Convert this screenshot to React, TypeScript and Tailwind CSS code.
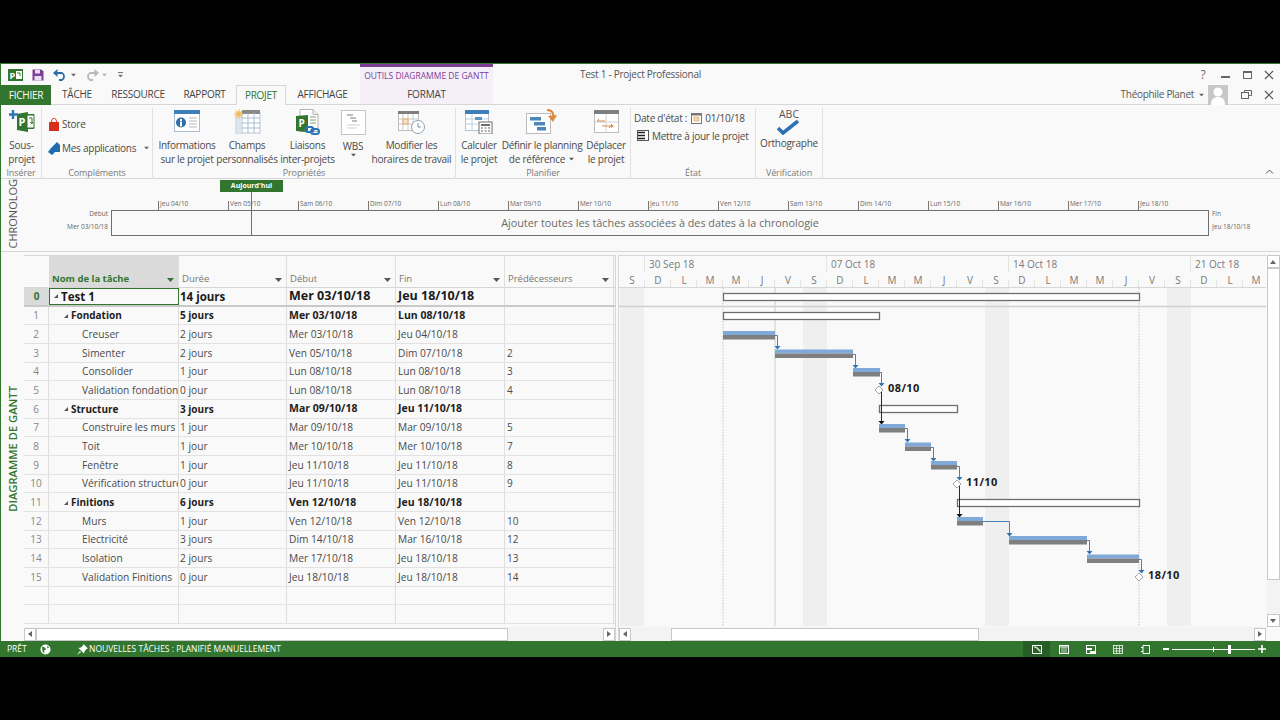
import React from "react";

const font = "font-['Open_Sans','Noto_Sans',sans-serif]";

type Task = { id: number; name: string; dur: string; start: string; end: string; pred: string; level: 0 | 1 | 2 };

const tasks: Task[] = [
  { id: 0, name: "Test 1", dur: "14 jours", start: "Mer 03/10/18", end: "Jeu 18/10/18", pred: "", level: 0 },
  { id: 1, name: "Fondation", dur: "5 jours", start: "Mer 03/10/18", end: "Lun 08/10/18", pred: "", level: 1 },
  { id: 2, name: "Creuser", dur: "2 jours", start: "Mer 03/10/18", end: "Jeu 04/10/18", pred: "", level: 2 },
  { id: 3, name: "Simenter", dur: "2 jours", start: "Ven 05/10/18", end: "Dim 07/10/18", pred: "2", level: 2 },
  { id: 4, name: "Consolider", dur: "1 jour", start: "Lun 08/10/18", end: "Lun 08/10/18", pred: "3", level: 2 },
  { id: 5, name: "Validation fondation", dur: "0 jour", start: "Lun 08/10/18", end: "Lun 08/10/18", pred: "4", level: 2 },
  { id: 6, name: "Structure", dur: "3 jours", start: "Mar 09/10/18", end: "Jeu 11/10/18", pred: "", level: 1 },
  { id: 7, name: "Construire les murs", dur: "1 jour", start: "Mar 09/10/18", end: "Mar 09/10/18", pred: "5", level: 2 },
  { id: 8, name: "Toit", dur: "1 jour", start: "Mer 10/10/18", end: "Mer 10/10/18", pred: "7", level: 2 },
  { id: 9, name: "Fenêtre", dur: "1 jour", start: "Jeu 11/10/18", end: "Jeu 11/10/18", pred: "8", level: 2 },
  { id: 10, name: "Vérification structure", dur: "0 jour", start: "Jeu 11/10/18", end: "Jeu 11/10/18", pred: "9", level: 2 },
  { id: 11, name: "Finitions", dur: "6 jours", start: "Ven 12/10/18", end: "Jeu 18/10/18", pred: "", level: 1 },
  { id: 12, name: "Murs", dur: "1 jour", start: "Ven 12/10/18", end: "Ven 12/10/18", pred: "10", level: 2 },
  { id: 13, name: "Electricité", dur: "3 jours", start: "Dim 14/10/18", end: "Mar 16/10/18", pred: "12", level: 2 },
  { id: 14, name: "Isolation", dur: "2 jours", start: "Mer 17/10/18", end: "Jeu 18/10/18", pred: "13", level: 2 },
  { id: 15, name: "Validation Finitions", dur: "0 jour", start: "Jeu 18/10/18", end: "Jeu 18/10/18", pred: "14", level: 2 },
];

const ticks = ["Jeu 04/10", "Ven 05/10", "Sam 06/10", "Dim 07/10", "Lun 08/10", "Mar 09/10", "Mer 10/10", "Jeu 11/10", "Ven 12/10", "Sam 13/10", "Dim 14/10", "Lun 15/10", "Mar 16/10", "Mer 17/10", "Jeu 18/10"];
const days = "S D L M M J V S D L M M J V S D L M M J V S D L M".split(" ");

function Caret({ className = "" }: { className?: string }) {
  return (
    <svg width="7" height="4" viewBox="0 0 7 4" className={className}>
      <path d="M0 0h7L3.5 4z" fill="currentColor" />
    </svg>
  );
}

function RibbonBtn({ w, icon, l1, l2, caret }: { w: string; icon: React.ReactNode; l1: string; l2?: string; caret?: boolean }) {
  return (
    <div className={`${w} flex flex-col items-center shrink-0`}>
      <div className="h-[28px] flex items-center justify-center">{icon}</div>
      <div className="h-[3px]" />
      <div className="text-[10px] tracking-[-0.25px] leading-[14px] whitespace-nowrap">{l1}</div>
      <div className="text-[10px] tracking-[-0.25px] leading-[14px] whitespace-nowrap flex items-center gap-[3px]">
        {l2}
        {caret && <Caret className="text-[#555] scale-75" />}
      </div>
    </div>
  );
}

function Group({ w, label, children }: { w: string; label: string; children: React.ReactNode }) {
  return (
    <div className={`${w} shrink-0 flex flex-col h-[71px] border-r border-[#e2e2e2]`}>
      <div className="flex-1 flex min-h-0">{children}</div>
      <div className="h-[13px] text-[9px] tracking-[-0.1px] leading-[13px] text-center text-[#7a7a7a]">{label}</div>
    </div>
  );
}

function SubProjectIcon() {
  return (
    <svg width="26" height="26" viewBox="0 0 26 26">
      <path d="M8 5l11-2v2h6v15h-6v3L8 21z" fill="#31752f" />
      <rect x="18" y="6" width="7" height="13" fill="#fff" stroke="#31752f" />
      <path d="M20 9h3v5M21 13l2 2 1-2" fill="none" stroke="#31752f" />
      <text x="9.5" y="17" fontSize="11" fontWeight="700" fill="#fff" fontFamily="Open Sans">P</text>
      <path d="M4 1v9M0 5.500h9" stroke="#2e75b6" strokeWidth="2.4" />
    </svg>
  );
}

function InfoIcon() {
  return (
    <svg width="26" height="24" viewBox="0 0 26 24">
      <rect x=".5" y=".5" width="25" height="21" fill="#fff" stroke="#a9bcd2" />
      <rect x="0" y="0" width="26" height="4" fill="#3e7fba" />
      <circle cx="7" cy="12.500" r="5" fill="#2e6da8" />
      <rect x="6" y="9" width="2" height="2" fill="#fff" />
      <rect x="6" y="11.500" width="2" height="5" fill="#fff" />
      <path d="M15 8h8M15 11h8M15 14h8M15 17h8" stroke="#b7b7b7" />
    </svg>
  );
}

function FieldsIcon() {
  return (
    <svg width="28" height="26" viewBox="0 0 28 26">
      <rect x="3" y="4" width="24" height="20" fill="#fff" stroke="#b7c4d3" />
      <rect x="9" y="1" width="18" height="4" fill="#8a8a8a" />
      <path d="M9 4v20M15 4v20M21 4v20M3 9h24M3 14h24M3 19h24" stroke="#a8bdd0" />
      <rect x="3.500" y="9" width="5" height="15" fill="#dbe5f0" />
      <circle cx="6" cy="5" r="3" fill="#f5c87d" />
      <path d="M6 0v10M1 5h10M2.500 1.500l7 7M9.500 1.500l-7 7" stroke="#f0b755" strokeWidth=".8" />
    </svg>
  );
}

function LinksIcon() {
  return (
    <svg width="26" height="26" viewBox="0 0 26 26">
      <path d="M5 .5h13l5 5v17H5z" fill="#fff" stroke="#b5b5b5" />
      <path d="M18 .5v5h5" fill="#eee" stroke="#b5b5b5" />
      <path d="M1 7l12-1v17l-12-1z" fill="#31752f" />
      <text x="3.500" y="18" fontSize="10" fontWeight="700" fill="#fff" fontFamily="Open Sans">P</text>
      <path d="M15 8h6M15 11h6M15 14h6" stroke="#7aa56f" />
      <rect x="10.500" y="18" width="8" height="5" rx="2.500" fill="none" stroke="#2e75b6" strokeWidth="2" />
      <rect x="16" y="20" width="8" height="5" rx="2.500" fill="none" stroke="#2e75b6" strokeWidth="2" />
    </svg>
  );
}

function WbsIcon() {
  return (
    <svg width="25" height="25" viewBox="0 0 25 25">
      <rect x=".5" y=".5" width="24" height="24" fill="#fff" stroke="#c4c4c4" />
      <path d="M6 5h6M9 8h6M11 11h5" stroke="#a8a8a8" strokeWidth="1.500" />
      <path d="M6 15h13M6 18h10" stroke="#d0d0d0" />
    </svg>
  );
}

function ScheduleIcon() {
  return (
    <svg width="28" height="26" viewBox="0 0 28 26">
      <rect x=".5" y="2.500" width="20" height="19" fill="#fff" stroke="#bcbcbc" />
      <rect x="0" y="2" width="21" height="3" fill="#7f7f7f" />
      <path d="M5 5v17M10 5v17M15 5v17M1 10h20M1 15h20" stroke="#c9c9c9" />
      <rect x="5" y="10" width="5" height="5" fill="#f7e3c8" stroke="#e0a96a" />
      <circle cx="20" cy="18" r="6.500" fill="#fff" stroke="#8d9fb3" />
      <path d="M20 14v4h3" fill="none" stroke="#7d8fa3" />
    </svg>
  );
}

function CalcIcon() {
  return (
    <svg width="28" height="24" viewBox="0 0 28 24">
      <rect x=".5" y=".5" width="23" height="20" fill="#fff" stroke="#b7c4d3" />
      <rect x="0" y="0" width="24" height="4" fill="#3e7fba" />
      <path d="M7 4v17M1 9h22M1 14h22" stroke="#bcd0e2" />
      <rect x="10" y="7" width="7" height="3" fill="#5d94c6" />
      <rect x="14" y="12" width="13" height="12" fill="#fff" stroke="#6e6e6e" />
      <rect x="16" y="14" width="9" height="2" fill="#6e6e6e" />
      <path d="M16 18h2M19.500 18h2M23 18h2M16 21h2M19.500 21h2M23 21h2" stroke="#5f5f5f" />
    </svg>
  );
}

function BaselineIcon() {
  return (
    <svg width="32" height="26" viewBox="0 0 32 26">
      <rect x=".5" y="4.500" width="24" height="20" fill="#fff" stroke="#bcbcbc" />
      <rect x="4" y="8" width="11" height="3.500" fill="#4d86bb" />
      <rect x="8" y="13" width="11" height="3.500" fill="#4d86bb" />
      <rect x="11" y="18" width="9" height="3.500" fill="#4d86bb" />
      <path d="M21 1c5 0 7 3 6 8" fill="none" stroke="#e08a3c" strokeWidth="2.200" />
      <path d="M22 7l5 6 4-7z" fill="#e08a3c" />
    </svg>
  );
}

function MoveIcon() {
  return (
    <svg width="25" height="24" viewBox="0 0 25 24">
      <rect x=".5" y=".5" width="24" height="22" fill="#fff" stroke="#bcbcbc" />
      <rect x="0" y="0" width="25" height="4" fill="#7f7f7f" />
      <path d="M1 12h23M12 4v19" stroke="#d0d0d0" />
      <path d="M5 9l-2 2h8M8 16h9l-2 2" fill="none" stroke="#d98a4a" />
      <path d="M17 14l3 2-3 2z" fill="#d98a4a" />
    </svg>
  );
}

function SpellIcon() {
  return (
    <svg width="24" height="15" viewBox="0 0 24 15">
      <path d="M1 8l5 5L21 1" fill="none" stroke="#2e72b2" strokeWidth="3.600" />
    </svg>
  );
}

function TitleBar() {
  return (
    <div className="h-[41px] flex shrink-0">
      <div className="w-[359px] shrink-0 flex flex-col">
        <div className="h-[21px] flex items-center">
          <svg width="15" height="14" viewBox="0 0 15 14" className="ml-[7px]">
            <rect x="0" y="1" width="15" height="12" fill="#31752f" />
            <rect x="8" y="3" width="6" height="8" fill="#fff" />
            <path d="M9 5h3v3" stroke="#31752f" fill="none" />
            <text x="1.500" y="10.500" fontSize="9" fontWeight="700" fill="#fff" fontFamily="Open Sans">P</text>
          </svg>
          <svg width="12" height="12" viewBox="0 0 12 12" className="ml-[9px]">
            <path d="M.5.500h9l2 2v9H.5z" fill="#7d3f98" />
            <rect x="3" y="1" width="5" height="3.500" fill="#e9dff0" />
            <rect x="2.500" y="7" width="7" height="4.500" fill="#e9dff0" />
          </svg>
          <svg width="14" height="12" viewBox="0 0 14 12" className="ml-[9px]">
            <path d="M3 4h6a4 4 0 0 1 0 7H6" fill="none" stroke="#2c6ca8" strokeWidth="1.800" />
            <path d="M4.500 0v8L0 4z" fill="#2c6ca8" />
          </svg>
          <Caret className="ml-[3px] text-[#666] scale-75" />
          <svg width="14" height="12" viewBox="0 0 14 12" className="ml-[8px]">
            <path d="M11 4H5a4 4 0 0 0 0 7h3" fill="none" stroke="#b9b9b9" strokeWidth="1.800" />
            <path d="M9.500 0v8L14 4z" fill="#b9b9b9" />
          </svg>
          <Caret className="ml-[2px] text-[#b5b5b5] scale-75" />
          <div className="ml-[9px] flex flex-col items-center gap-px text-[#777]">
            <div className="w-[5px] h-px bg-[#777]" />
            <Caret className="scale-75" />
          </div>
        </div>
        <div className="h-[20px] flex text-[10px] tracking-[-0.25px] text-[#444] border-b border-[#d6d6d6]">
          <div className="ml-0 w-[50px] h-[20px] bg-[#31752f] text-white flex items-center justify-center">FICHIER</div>
          <div className="w-[52px] flex items-center justify-center">TÂCHE</div>
          <div className="w-[70px] flex items-center justify-center">RESSOURCE</div>
          <div className="w-[63px] flex items-center justify-center">RAPPORT</div>
          <div className="w-[50px] h-[20px] border border-b-0 border-[#d6d6d6] bg-[#f9f9f9] text-[#31752f] flex items-center justify-center">PROJET</div>
          <div className="w-[73px] flex items-center justify-center">AFFICHAGE</div>
        </div>
      </div>
      <div className="w-[133px] shrink-0 bg-[#f4eff8] border-t-[3px] border-[#7d3f98] border-b border-b-[#d6d6d6] flex flex-col items-center">
        <div className="h-[18px] flex items-center text-[8.5px] text-[#7d3f98] whitespace-nowrap">OUTILS DIAGRAMME DE GANTT</div>
        <div className="h-[19px] flex items-center text-[10px] tracking-[-0.2px] text-[#444]">FORMAT</div>
      </div>
      <div className="flex-1 flex flex-col min-w-0">
        <div className="h-[21px] flex items-center text-[10px] tracking-[-0.27px] text-[#555]">
          <div className="ml-[87px] whitespace-nowrap">Test 1 - Project Professional</div>
          <div className="ml-auto flex items-center text-[#666]">
            <div className="w-[22px] text-center text-[12px]">?</div>
            <div className="w-[22px] flex justify-center">
              <div className="w-[9px] h-[2px] bg-[#666] mt-[5px]" />
            </div>
            <div className="w-[22px] flex justify-center">
              <div className="w-[9px] h-[8px] border border-[#666] border-t-2" />
            </div>
            <svg width="22" height="10" viewBox="0 0 22 10" className="mr-0">
              <path d="M7 1l8 8M15 1l-8 8" stroke="#555" strokeWidth="1.200" />
            </svg>
          </div>
        </div>
        <div className="h-[20px] flex items-center border-b border-[#d6d6d6] text-[10px] tracking-[-0.3px] text-[#555]">
          <div className="ml-auto flex items-center">
            <span className="whitespace-nowrap">Théophile Planet</span>
            <Caret className="ml-[4px] text-[#666] scale-75" />
            <svg width="20" height="20" viewBox="0 0 20 20" className="ml-[3px]">
              <rect width="20" height="20" fill="#c8c8c8" />
              <circle cx="10" cy="7" r="4.500" fill="#fff" />
              <path d="M3 20c0-6 3-8 7-8s7 2 7 8z" fill="#fff" />
            </svg>
            <svg width="11" height="9" viewBox="0 0 11 9" className="ml-[13px]">
              <path d="M3.500 2V.5h7v5H8" fill="none" stroke="#666" />
              <rect x=".5" y="2.500" width="7" height="6" fill="none" stroke="#666" />
            </svg>
            <svg width="22" height="10" viewBox="0 0 22 10" className="ml-[6px]">
              <path d="M7 1l8 8M15 1l-8 8" stroke="#555" strokeWidth="1.200" />
            </svg>
          </div>
        </div>
      </div>
    </div>
  );
}

function Ribbon() {
  return (
    <div className="h-[74px] shrink-0 flex pt-[3px] border-b border-[#d6d6d6] text-[#4a4a4a] relative">
      <Group w="w-[41px]" label="Insérer">
        <RibbonBtn w="w-[41px]" icon={<SubProjectIcon />} l1="Sous-" l2="projet" />
      </Group>
      <Group w="w-[111px]" label="Compléments">
        <div className="flex flex-col pl-[6px] text-[10px] tracking-[-0.25px]">
          <div className="h-[24px] mt-[4px] flex items-center gap-[2px]">
            <svg width="12" height="13" viewBox="0 0 12 13">
              <path d="M1 4h10v9H1z" fill="#d8301c" />
              <path d="M3.500 4c0-5 5-5 5 0" fill="none" stroke="#d8301c" />
            </svg>
            Store
          </div>
          <div className="h-[24px] flex items-center gap-[2px] whitespace-nowrap">
            <svg width="12" height="13" viewBox="0 0 12 13">
              <path d="M3 6l6-6 3 3v7H7L4 13 0 10z" fill="#1f6cb0" />
            </svg>
            Mes applications
            <Caret className="ml-[5px] text-[#666] scale-75" />
          </div>
        </div>
      </Group>
      <Group w="w-[303px]" label="Propriétés">
        <div className="w-[4px] shrink-0" />
        <RibbonBtn w="w-[60px]" icon={<InfoIcon />} l1="Informations" l2="sur le projet" />
        <RibbonBtn w="w-[60px]" icon={<FieldsIcon />} l1="Champs" l2="personnalisés" />
        <RibbonBtn w="w-[61px]" icon={<LinksIcon />} l1="Liaisons" l2="inter-projets" />
        <RibbonBtn w="w-[30px]" icon={<WbsIcon />} l1="WBS" caret />
        <RibbonBtn w="w-[87px]" icon={<ScheduleIcon />} l1="Modifier les" l2="horaires de travail" />
      </Group>
      <Group w="w-[175px]" label="Planifier">
        <RibbonBtn w="w-[46px]" icon={<CalcIcon />} l1="Calculer" l2="le projet" />
        <RibbonBtn w="w-[80px]" icon={<BaselineIcon />} l1="Définir le planning" l2="de référence" caret />
        <RibbonBtn w="w-[48px]" icon={<MoveIcon />} l1="Déplacer" l2="le projet" />
      </Group>
      <Group w="w-[125px]" label="État">
        <div className="flex flex-col pl-[3px] text-[10px] tracking-[-0.25px]">
          <div className="h-[18px] mt-[1px] flex items-center whitespace-nowrap">
            Date d'état :
            <svg width="11" height="11" viewBox="0 0 11 11" className="ml-[4px] mr-[3px]">
              <rect x=".5" y=".5" width="10" height="10" fill="#fff" stroke="#777" />
              <rect width="11" height="2.500" fill="#777" />
              <rect x="3" y="4" width="5" height="4" fill="#f3d9b8" stroke="#d99b55" strokeWidth=".6" />
            </svg>
            01/10/18
          </div>
          <div className="h-[18px] flex items-center whitespace-nowrap pl-[3px] gap-[3px]">
            <svg width="12" height="12" viewBox="0 0 12 12">
              <rect x=".5" y=".5" width="11" height="10" fill="#fff" stroke="#555" />
              <path d="M1 2.500h7M1 5.500h7M1 8.500h7" stroke="#222" strokeWidth="1.500" />
            </svg>
            Mettre à jour le projet
          </div>
        </div>
      </Group>
      <Group w="w-[67px]" label="Vérification">
        <div className="w-full flex flex-col items-center">
          <div className="text-[10.5px] leading-[11px] text-[#555] mt-px">ABC</div>
          <SpellIcon />
          <div className="h-[1px]" />
          <div className="text-[10px] tracking-[-0.25px] leading-[14px]">Orthographe</div>
        </div>
      </Group>
      <svg width="9" height="5" viewBox="0 0 9 5" className="absolute right-[6px] bottom-[4px]">
        <path d="M1 4.500l3.500-3.500 3.500 3.500" fill="none" stroke="#555" />
      </svg>
    </div>
  );
}

function Timeline() {
  return (
    <div className="h-[73px] shrink-0 flex border-b border-[#d6d6d6] relative">
      <div className="w-[23px] shrink-0 flex justify-center items-end pb-[2px]">
        <div className="[writing-mode:vertical-rl] rotate-180 text-[11px] leading-[14px] text-[#555] whitespace-nowrap">CHRONOLOG</div>
      </div>
      <div className="w-[87px] shrink-0 pt-[28px] pr-[3px] text-right text-[6.5px] leading-[13px] text-[#666]">
        <div>Début</div>
        <div className="whitespace-nowrap">Mer 03/10/18</div>
      </div>
      <div className="w-[1098px] shrink-0 flex flex-col">
        <div className="h-[31px] flex pl-[47px] items-end">
          {ticks.map((t) => (
            <div key={t} className="w-[70px] shrink-0 h-[9px] border-l border-[#777] pl-px text-[6.5px] leading-[6px] text-[#666] whitespace-nowrap">
              {t}
            </div>
          ))}
        </div>
        <div className="h-[26px] border border-[#6f6f6f] flex items-center justify-center text-[10.8px] text-[#6b6b6b] whitespace-nowrap">
          Ajouter toutes les tâches associées à des dates à la chronologie
        </div>
      </div>
      <div className="pt-[28px] pl-[3px] text-[6.5px] leading-[13px] text-[#666] whitespace-nowrap">
        <div>Fin</div>
        <div>Jeu 18/10/18</div>
      </div>
      <div className="absolute left-[219px] top-[1px] w-[63px] h-[12px] bg-[#31752f] text-white text-[7px] font-bold leading-[12px] text-center">Aujourd'hui</div>
      <div className="absolute left-[250px] top-[13px] w-px h-[43px] bg-[#4d8a4a]" />
    </div>
  );
}

function ScrollH({ left, thumb, after }: { left?: string; thumb: string; after: string }) {
  return (
    <div className="h-[14px] shrink-0 flex items-center bg-[#f3f3f3]">
      <div className="w-[12px] h-[13px] shrink-0 bg-white border border-[#c8c8c8] flex items-center justify-center">
        <div className="w-0 h-0 border-y-[3px] border-y-transparent border-r-[4px] border-r-[#666]" />
      </div>
      {left && <div className={`${left} shrink-0`} />}
      <div className={`${thumb} h-[13px] shrink-0 bg-white border border-[#c8c8c8]`} />
      <div className={`${after} shrink-0`} />
      <div className="w-[12px] h-[13px] shrink-0 bg-white border border-[#c8c8c8] flex items-center justify-center">
        <div className="w-0 h-0 border-y-[3px] border-y-transparent border-l-[4px] border-l-[#666]" />
      </div>
    </div>
  );
}

function HeaderCell({ w, label, active }: { w: string; label: string; active?: boolean }) {
  return (
    <div
      className={`${w} shrink-0 h-full flex items-end justify-between pl-[3px] pr-[4px] pb-[2px] border-r border-[#dedede] text-[9.5px] leading-[13px] ${
        active ? "bg-[#dadada] text-[#31752f] font-bold" : "text-[#777]"
      }`}
    >
      <span className="whitespace-nowrap">{label}</span>
      <Caret className={`mb-[3px] ${active ? "text-[#31752f]" : "text-[#555]"}`} />
    </div>
  );
}

function TaskRow({ task }: { task: Task }) {
  const weight = task.level === 0 ? "font-bold text-[11.5px] text-[#1a1a1a]" : task.level === 1 ? "font-bold text-[10px] text-[#222]" : "text-[10.2px] text-[#4a4a4a]";
  const dateWeight = task.level === 0 ? "font-bold text-[12.5px] text-[#1a1a1a]" : task.level === 1 ? "font-bold text-[10.5px] text-[#222]" : "text-[10.2px] text-[#4a4a4a]";
  const pad = task.level === 0 ? "pl-[4px]" : task.level === 1 ? "pl-[15px]" : "pl-[33px]";
  const selected = task.id === 0;
  return (
    <div className={`h-[18.67px] flex ${selected ? "border-b-2 border-[#c9c9c9]" : "border-b border-[#e2e2e2]"}`}>
      <div className={`w-[25px] shrink-0 pt-px flex items-center justify-center text-[10px] ${selected ? "bg-[#dadada] text-[#31752f] font-bold" : "text-[#888] border-r border-[#dedede]"}`}>
        {task.id}
      </div>
      <div className={`w-[130px] shrink-0 overflow-hidden flex items-center whitespace-nowrap relative ${pad} ${weight} ${selected ? "border border-[#31752f]" : "pt-px border-r border-[#dedede]"}`}>
        {task.level < 2 && <div className="w-0 h-0 mr-[3px] border-t-[4px] border-t-transparent border-r-[4px] border-r-[#555] shrink-0" />}
        {task.name}
      </div>
      <div className={`w-[108px] shrink-0 pl-px pt-px flex items-center border-r border-[#dedede] whitespace-nowrap ${weight}`}>{task.dur}</div>
      <div className={`w-[109px] shrink-0 pl-[2px] pt-px flex items-center border-r border-[#dedede] whitespace-nowrap ${dateWeight}`}>{task.start}</div>
      <div className={`w-[109px] shrink-0 pl-[2px] pt-px flex items-center border-r border-[#dedede] whitespace-nowrap ${dateWeight}`}>{task.end}</div>
      <div className="w-[109px] shrink-0 pl-[2px] pt-px flex items-center border-r border-[#dedede] text-[10px] text-[#4a4a4a]">{task.pred}</div>
    </div>
  );
}

function EmptyRow() {
  return (
    <div className="h-[18.67px] flex border-b border-[#e2e2e2]">
      <div className="w-[25px] shrink-0 border-r border-[#dedede]" />
      <div className="w-[130px] shrink-0 border-r border-[#dedede]" />
      <div className="w-[108px] shrink-0 border-r border-[#dedede]" />
      <div className="w-[109px] shrink-0 border-r border-[#dedede]" />
      <div className="w-[109px] shrink-0 border-r border-[#dedede]" />
      <div className="w-[109px] shrink-0 border-r border-[#dedede]" />
    </div>
  );
}

function TaskTable() {
  return (
    <div className="w-[591px] shrink-0 flex flex-col">
      <div className="flex-1 min-h-0 overflow-hidden">
        <div className="h-[33px] flex border-y border-[#d6d6d6]">
          <div className="w-[25px] shrink-0" />
          <HeaderCell w="w-[130px]" label="Nom de la tâche" active />
          <HeaderCell w="w-[108px]" label="Durée" />
          <HeaderCell w="w-[109px]" label="Début" />
          <HeaderCell w="w-[109px]" label="Fin" />
          <HeaderCell w="w-[109px]" label="Prédécesseurs" />
        </div>
        {tasks.map((t) => (
          <TaskRow key={t.id} task={t} />
        ))}
        <EmptyRow />
        <EmptyRow />
      </div>
      <ScrollH thumb="w-[472px]" after="w-[95px]" />
    </div>
  );
}

// chart origin is x=619, y=288
const X = (x: number) => x - 619;
const Y = (y: number) => y - 288;

function Bar({ x1, x2, y }: { x1: number; x2: number; y: number }) {
  return (
    <g>
      <rect x={X(x1)} y={Y(y)} width={x2 - x1} height="4" fill="#7fa9d8" />
      <rect x={X(x1)} y={Y(y) + 4} width={x2 - x1} height="4.500" fill="#7f7f7f" />
    </g>
  );
}

function Summary({ x1, x2, y }: { x1: number; x2: number; y: number }) {
  return (
    <rect x={X(x1) + 0.5} y={Y(y) + 0.5} width={x2 - x1 - 1} height="7" fill="#fff" stroke="#6e6e6e" strokeWidth="1.300" />
  );
}

function Diamond({ x, y }: { x: number; y: number }) {
  return <path d={`M${X(x)} ${Y(y) - 4}l4 4-4 4-4-4z`} fill="#fff" stroke="#9a9a9a" strokeWidth=".9" />;
}

function Link({ x1, y1, x2, y2, black }: { x1: number; y1: number; x2: number; y2: number; black?: boolean }) {
  const c = black ? "#111" : "#2f75b5";
  return (
    <g>
      <path d={`M${X(x1)} ${Y(y1) + 0.5}H${X(x2) + 0.5}V${Y(y2)}`} fill="none" stroke={c} strokeWidth=".9" />
      <path d={`M${X(x2) - 2.500} ${Y(y2) - 3}h6l-3 3.500z`} fill={c} />
    </g>
  );
}

function GanttChart() {
  return (
    <svg width="647" height="338" viewBox="0 0 647 338" className="block">
      {[620, 803, 985, 1167].map((x) => (
        <rect key={x} x={X(x)} y="0" width="24" height="338" fill="#efefef" />
      ))}
      <path d="M0 18.500H647" stroke="#cfcfcf" strokeWidth="1.500" />
      <path d={`M${X(723)} 0V338`} stroke="#c4c4c4" strokeDasharray="1.500 1.500" />
      <path d={`M${X(1139)} 0V338`} stroke="#c4c4c4" strokeDasharray="1.500 1.500" />
      <path d={`M${X(775)} 0V338`} stroke="#c8dcc6" strokeWidth="1.200" />

      <Summary x1={723} x2={1140} y={293} />
      <Summary x1={723} x2={880} y={312} />
      <Summary x1={879} x2={958} y={405} />
      <Summary x1={957} x2={1140} y={499} />

      <Link x1={775} y1={335} x2={777} y2={349} />
      <Link x1={853} y1={354} x2={855} y2={368} />
      <Link x1={879} y1={372} x2={881} y2={386} />
      <Link x1={881} y1={388} x2={881} y2={424} black />
      <Link x1={905} y1={428} x2={907} y2={442} />
      <Link x1={931} y1={447} x2={933} y2={461} />
      <Link x1={957} y1={466} x2={959} y2={480} />
      <Link x1={959} y1={482} x2={959} y2={517} black />
      <Link x1={983} y1={521} x2={1009} y2={536} />
      <Link x1={1087} y1={540} x2={1089} y2={554} />
      <Link x1={1139} y1={559} x2={1141} y2={573} />

      <Bar x1={723} x2={775} y={331} />
      <Bar x1={775} x2={853} y={349.5} />
      <Bar x1={853} x2={880} y={368} />
      <Bar x1={879} x2={905} y={424} />
      <Bar x1={905} x2={931} y={442.5} />
      <Bar x1={931} x2={957} y={461} />
      <Bar x1={957} x2={983} y={517} />
      <Bar x1={1009} x2={1087} y={536} />
      <Bar x1={1087} x2={1139} y={554.5} />

      <Diamond x={879} y={390} />
      <Diamond x={957} y={484} />
      <Diamond x={1139} y={577} />

      <g fontSize="11" fontWeight="700" fill="#1a1a1a" letterSpacing=".4">
        <text x={X(888)} y={Y(392)}>08/10</text>
        <text x={X(966)} y={Y(485.500)}>11/10</text>
        <text x={X(1148)} y={Y(579)}>18/10</text>
      </g>
    </svg>
  );
}

function Gantt() {
  return (
    <div className="w-[647px] shrink-0 flex flex-col overflow-hidden">
      <div className="h-[33px] shrink-0 border-y border-[#d6d6d6] flex flex-col text-[#7a7a7a] overflow-hidden">
        <div className="h-[16px] flex text-[10px] leading-[16px]">
          <div className="w-[26px] shrink-0 border-r border-[#e3e3e3]" />
          {["30 Sep 18", "07 Oct 18", "14 Oct 18", "21 Oct 18"].map((d) => (
            <div key={d} className="w-[182px] shrink-0 pl-[4px] border-r border-[#e3e3e3] whitespace-nowrap">
              {d}
            </div>
          ))}
        </div>
        <div className="h-[16px] flex text-[10px] leading-[16px]">
          {days.map((d, i) => (
            <div key={i} className="w-[26px] shrink-0 text-center relative">
              {d}
              <div className="absolute right-0 top-[8px] w-px h-[8px] bg-[#e3e3e3]" />
            </div>
          ))}
        </div>
      </div>
      <div className="flex-1 min-h-0 overflow-hidden">
        <GanttChart />
      </div>
      <ScrollH left="w-[40px]" thumb="w-[308px]" after="w-[275px]" />
    </div>
  );
}

function StatusBar() {
  return (
    <div className="h-[16px] shrink-0 bg-[#31752f] text-white flex items-center text-[8.5px] whitespace-nowrap">
      <span className="ml-[6px] w-[32px]">PRÊT</span>
      <svg width="11" height="11" viewBox="0 0 11 11" className="ml-px">
        <circle cx="5.500" cy="5.500" r="5" fill="#fff" />
        <path d="M2 2.500l3 1 1 2-2 1 .5 3-2-2zM7 1.500l2 2-1.500 1z" fill="#31752f" />
      </svg>
      <svg width="11" height="11" viewBox="0 0 11 11" className="ml-[26px]">
        <path d="M6.500 0L11 4.500 9.500 5 7.500 7.500 7 9.500 1.500 4 4 3.500 6 1.500zM3 7L0 11l4-3z" fill="#fff" />
      </svg>
      <span className="ml-px">NOUVELLES TÂCHES : PLANIFIÉ MANUELLEMENT</span>
      <div className="ml-auto flex items-center h-full">
        <div className="w-[27px] h-full bg-[#265e25] flex items-center justify-center">
          <svg width="10" height="9" viewBox="0 0 10 9">
            <rect x=".5" y=".5" width="9" height="8" fill="none" stroke="#fff" />
            <path d="M2 2h2v1h2v2h2v2" fill="none" stroke="#fff" />
          </svg>
        </div>
        <div className="w-[27px] flex justify-center">
          <svg width="10" height="9" viewBox="0 0 10 9">
            <rect x=".5" y=".5" width="9" height="8" fill="none" stroke="#fff" />
            <path d="M3 1v7M5 1v7M7 1v7M.5 2h9" stroke="#fff" strokeWidth=".7" />
          </svg>
        </div>
        <div className="w-[27px] flex justify-center">
          <svg width="10" height="9" viewBox="0 0 10 9">
            <rect x=".5" y=".5" width="9" height="8" fill="none" stroke="#fff" />
            <rect x="1" y="3" width="5" height="2" fill="#fff" />
            <rect x="4" y="6" width="5" height="2" fill="#fff" />
          </svg>
        </div>
        <div className="w-[27px] flex justify-center">
          <svg width="10" height="9" viewBox="0 0 10 9">
            <rect x=".5" y=".5" width="9" height="8" fill="none" stroke="#fff" strokeWidth=".8" />
            <path d="M3.500 1v7M6.500 1v7M1 3.500h8M1 6h8" stroke="#fff" strokeWidth=".7" />
          </svg>
        </div>
        <div className="w-[27px] flex justify-center">
          <svg width="10" height="9" viewBox="0 0 10 9">
            <path d="M3 .5h6.500v8H3zM3 2.500H1M3 6.500H1" fill="none" stroke="#fff" />
          </svg>
        </div>
        <div className="w-[122px] flex items-center pl-[5px] pr-[14px] gap-[3px]">
          <div className="w-[6px] h-[2px] bg-white shrink-0" />
          <div className="flex-1 h-px bg-white relative">
            <div className="absolute left-[41px] -top-[2px] w-px h-[5px] bg-white" />
            <div className="absolute left-[56px] -top-[4px] w-[3px] h-[9px] bg-white" />
          </div>
          <svg width="8" height="8" viewBox="0 0 8 8" className="shrink-0">
            <path d="M4 0v8M0 4h8" stroke="#fff" strokeWidth="1.600" />
          </svg>
        </div>
      </div>
    </div>
  );
}

export default function App() {
  return (
    <div className={`w-[1280px] h-[720px] bg-black flex flex-col overflow-hidden ${font}`}>
      <div className="h-[63px] shrink-0" />
      <div className="h-[594px] shrink-0 flex flex-col bg-[#f9f9f9] border-t border-[#31752f] border-l border-l-[#31752f]">
        <TitleBar />
        <Ribbon />
        <Timeline />
        <div className="h-[3px] shrink-0" />
        <div className="flex-1 min-h-0 flex">
          <div className="w-[23px] shrink-0 flex justify-center items-end pb-[129px]">
            <div className="[writing-mode:vertical-rl] rotate-180 text-[11.2px] leading-[14px] font-semibold text-[#31752f] whitespace-nowrap">DIAGRAMME DE GANTT</div>
          </div>
          <TaskTable />
          <div className="w-[4px] shrink-0 border-x border-[#d6d6d6]" />
          <Gantt />
          <div className="w-[14px] shrink-0 flex flex-col items-center pb-[14px]">
            <div className="w-[13px] h-[13px] bg-white border border-[#c8c8c8] flex items-center justify-center">
              <div className="w-0 h-0 border-x-[3px] border-x-transparent border-b-[4px] border-b-[#666]" />
            </div>
            <div className="w-[13px] h-[312px] bg-white border border-[#c8c8c8]" />
            <div className="flex-1 w-[13px] bg-[#f3f3f3]" />
            <div className="w-[13px] h-[13px] bg-white border border-[#c8c8c8] flex items-center justify-center">
              <div className="w-0 h-0 border-x-[3px] border-x-transparent border-t-[4px] border-t-[#666]" />
            </div>
          </div>
        </div>
        <StatusBar />
      </div>
      <div className="flex-1" />
    </div>
  );
}
